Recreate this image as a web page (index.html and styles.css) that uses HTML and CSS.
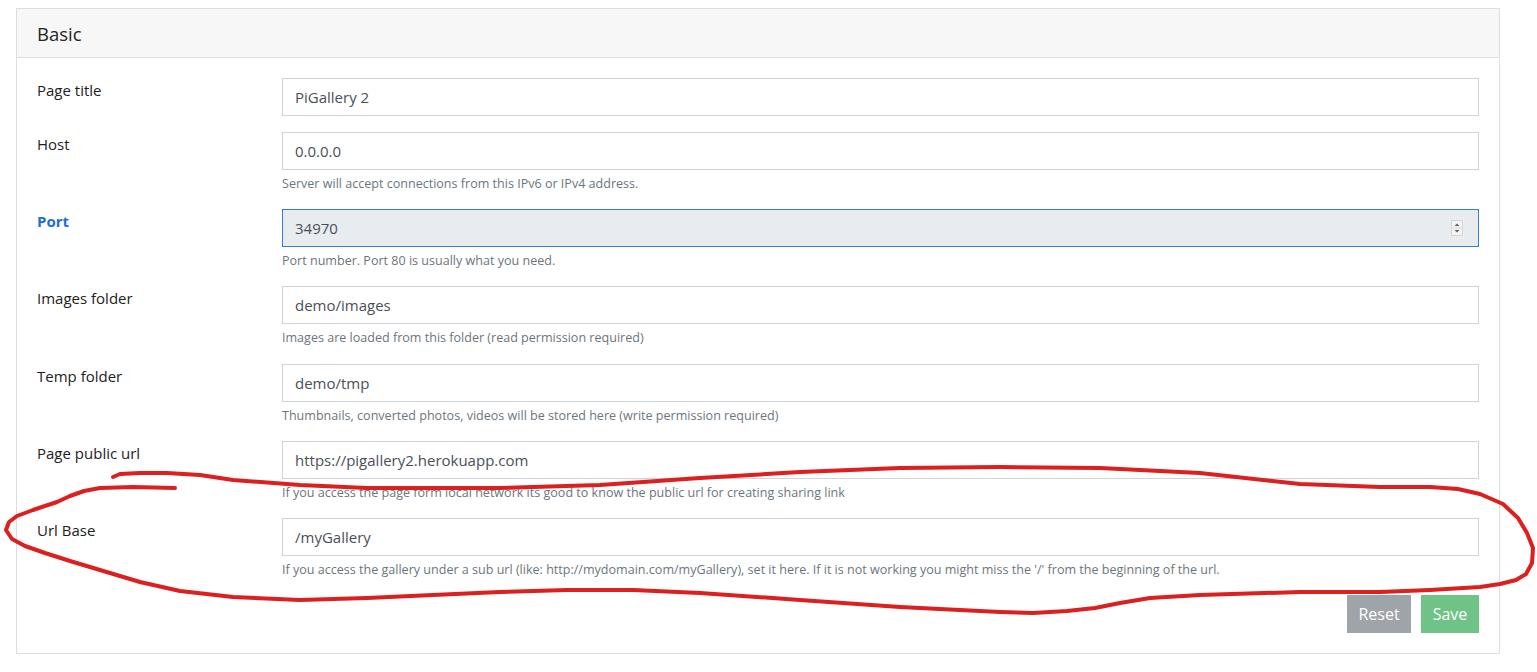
FILE: index.html
```html
<!DOCTYPE html>
<html lang="en">
<head>
<meta charset="utf-8">
<title>Basic settings</title>
<link rel="stylesheet" href="styles.css">
</head>
<body>
<div class="page">
  <div class="card">
    <div class="card-header">Basic</div>
    <div class="card-body">
      <div class="form-row">
        <label class="form-label">Page title</label>
        <div class="field">
          <div class="input">PiGallery 2</div>
        </div>
      </div>
      <div class="form-row">
        <label class="form-label">Host</label>
        <div class="field">
          <div class="input">0.0.0.0</div>
          <small class="help">Server will accept connections from this IPv6 or IPv4 address.</small>
        </div>
      </div>
      <div class="form-row">
        <label class="form-label is-changed">Port</label>
        <div class="field">
          <div class="input input-number">
            <span>34970</span>
            <span class="spinner">
              <svg width="12" height="16" viewBox="0 0 12 16">
                <rect x="0.5" y="0.5" width="11" height="15" fill="#f4f4f4" stroke="#d6d6d6"/>
                <line x1="0.5" y1="8" x2="11.5" y2="8" stroke="#d6d6d6"/>
                <path d="M3.5 6 L6 3.5 L8.5 6 Z" fill="#606060"/>
                <path d="M3.5 10 L6 12.5 L8.5 10 Z" fill="#606060"/>
              </svg>
            </span>
          </div>
          <small class="help">Port number. Port 80 is usually what you need.</small>
        </div>
      </div>
      <div class="form-row">
        <label class="form-label">Images folder</label>
        <div class="field">
          <div class="input">demo/images</div>
          <small class="help">Images are loaded from this folder (read permission required)</small>
        </div>
      </div>
      <div class="form-row">
        <label class="form-label">Temp folder</label>
        <div class="field">
          <div class="input">demo/tmp</div>
          <small class="help">Thumbnails, converted photos, videos will be stored here (write permission required)</small>
        </div>
      </div>
      <div class="form-row">
        <label class="form-label">Page public url</label>
        <div class="field">
          <div class="input">https://pigallery2.herokuapp.com</div>
          <small class="help">If you access the page form local network its good to know the public url for creating sharing link</small>
        </div>
      </div>
      <div class="form-row">
        <label class="form-label">Url Base</label>
        <div class="field">
          <div class="input">/myGallery</div>
          <small class="help">If you access the gallery under a sub url (like: http://mydomain.com/myGallery), set it here. If it is not working you might miss the '/' from the beginning of the url.</small>
        </div>
      </div>
      <div class="actions">
        <button class="btn btn-reset">Reset</button>
        <button class="btn btn-save">Save</button>
      </div>
    </div>
  </div>
  <svg class="annotation" width="1537" height="672" viewBox="0 0 1537 672">
    <polyline fill="none" stroke="#dc1f1f" stroke-width="4" stroke-linecap="round" stroke-linejoin="round"
      points="113,477 120,474 140,473 167,473 200,475 233,480 300,485 367,488 450,488 500,488 600,485 700,478 800,472 900,468 1000,467 1100,468 1200,473 1300,484 1380,487 1430,487 1458,489 1480,494 1503,504 1518,518 1527,533 1533,548 1532,563 1526,574 1516,580 1500,584 1480,587 1430,590 1380,592 1300,592 1200,595 1150,598 1120,603 1095,608 1067,611 1033,613 1000,612 900,607 800,600 700,593 633,590 567,590 500,592 433,595 367,598 300,600 233,597 180,591 140,582 100,570 70,561 45,553 25,546 12,539 6,530 9,522 17,516 33,510 57,502 70,496 84,491 100,488 133,487 175,488"/>
  </svg>
</div>
</body>
</html>
```
FILE: styles.css
```css
* {
  box-sizing: border-box;
}

html, body {
  margin: 0;
  padding: 0;
  background: #ffffff;
}

body {
  font-family: "Open Sans", "Noto Sans", "Liberation Sans", sans-serif;
  color: #212529;
}

.page {
  position: relative;
  width: 1537px;
  height: 672px;
  padding: 8px 37px 0 16px;
  overflow: hidden;
}

.card {
  border: 1px solid #dedede;
  background: #fff;
}

.card-header {
  background: #f7f7f7;
  border-bottom: 1px solid #dedede;
  padding: 13px 20px 11px;
  height: 49px;
  font-size: 18.5px;
  line-height: 24px;
  color: #212529;
}

.card-body {
  padding: 20px 20px 20px 20px;
}

.form-row {
  display: grid;
  grid-template-columns: 215px 1fr;
  column-gap: 30px;
  margin-bottom: 16px;
}

.form-label {
  font-size: 15px;
  line-height: 24px;
  color: #1d2124;
}

.form-label.is-changed {
  color: #1b6fd6;
  font-weight: 700;
}

.field {
  display: flex;
  flex-direction: column;
}

.input {
  height: 38px;
  border: 1px solid #ced4da;
  padding: 6px 12px;
  font-size: 15px;
  line-height: 24px;
  color: #495057;
  background: #fff;
  white-space: nowrap;
}

.input-number {
  display: flex;
  justify-content: space-between;
  align-items: center;
  background: #e9ecef;
  border-color: #2f80d6;
  padding-right: 15px;
}

.spinner {
  display: flex;
  align-items: center;
}

.spinner svg {
  display: block;
}

.help {
  margin-top: 4px;
  font-size: 12.55px;
  line-height: 19.2px;
  color: #6c757d;
  white-space: nowrap;
}

.actions {
  display: flex;
  justify-content: flex-end;
  gap: 10px;
}

.btn {
  height: 38px;
  border: none;
  border-radius: 0;
  padding: 0;
  font-family: "Open Sans", "Noto Sans", sans-serif;
  font-size: 16px;
  color: #ffffff;
}

.btn-reset {
  background: #9fa4a9;
  width: 64px;
}

.btn-save {
  background: #70c386;
  width: 58px;
}

.annotation {
  position: absolute;
  left: 0;
  top: 0;
  pointer-events: none;
}
```
